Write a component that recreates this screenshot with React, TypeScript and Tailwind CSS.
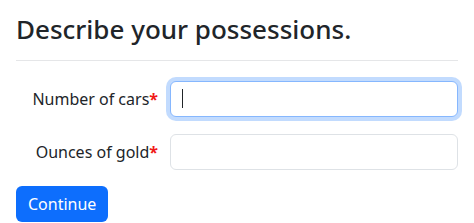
export default function App() {
  return (
    <main className="px-4 pt-[14px] font-['Noto_Sans',sans-serif] text-[#212529]">
      <h3 className="text-[26px] leading-[1.2] font-medium">Describe your possessions.</h3>
      <hr className="mt-[15px] border-t border-[#e5e6e8]" />

      <form className="mt-[20px]">
        <div className="flex items-center gap-[12px]">
          <label className="w-[142px] text-right text-base">
            Number of cars<span className="font-bold text-[#f01818]">*</span>
          </label>
          <div className="relative flex-1">
            <input
              type="number"
              className="block h-[36px] w-full rounded-md border border-[#86b7fe] bg-white px-3 text-base outline-none ring-4 ring-[#0d6efd]/25"
            />
            <span className="absolute left-[12px] top-[8px] h-[19px] w-px bg-[#212529]" />
          </div>
        </div>

        <div className="mt-[17px] flex items-center gap-[12px]">
          <label className="w-[142px] text-right text-base">
            Ounces of gold<span className="font-bold text-[#f01818]">*</span>
          </label>
          <input
            type="number"
            className="block h-[36px] flex-1 rounded-md border border-[#dee2e6] bg-white px-3 text-base outline-none"
          />
        </div>

        <button
          type="button"
          className="mt-[16px] rounded-md bg-[#0d6efd] px-3 py-[6px] text-base text-white"
        >
          Continue
        </button>
      </form>
    </main>
  );
}
